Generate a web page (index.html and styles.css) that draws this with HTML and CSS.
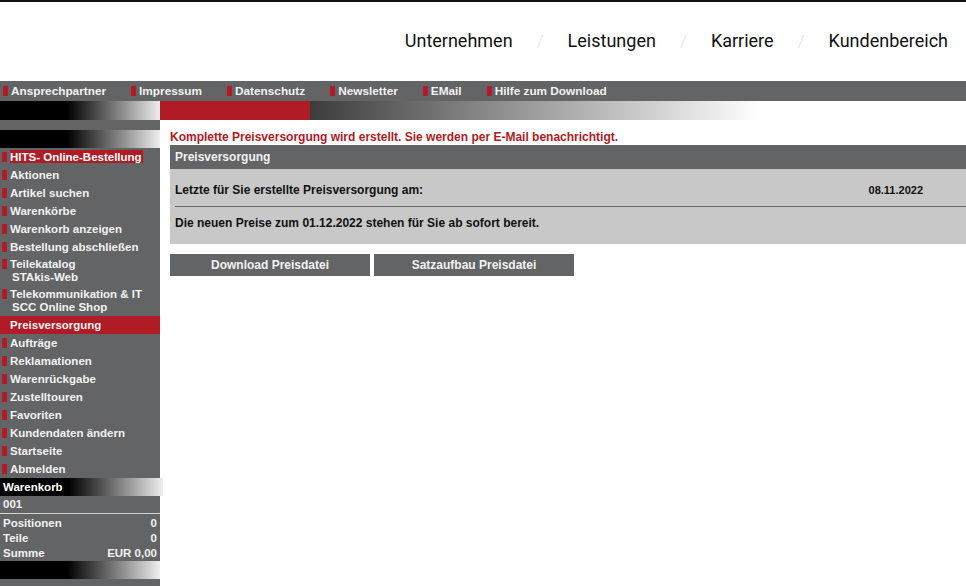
FILE: index.html
```html
<!DOCTYPE html>
<html lang="de">
<head>
	<meta charset="UTF-8" />
	<meta name="viewport" content="width=device-width, initial-scale=1.0" />
	<title>Preisversorgung</title>
	<link rel="stylesheet" href="styles.css">
</head>
<body>
	<div class="kopf">
		<ul class="hauptnav">
			<li><a href="#">Unternehmen</a></li>
			<li class="trenner">/</li>
			<li><a href="#">Leistungen</a></li>
			<li class="trenner">/</li>
			<li><a href="#">Karriere</a></li>
			<li class="trenner">/</li>
			<li><a href="#">Kundenbereich</a></li>
		</ul>
	</div>
	<div class="leiste">
		<a href="#">Ansprechpartner</a>
		<a href="#">Impressum</a>
		<a href="#">Datenschutz</a>
		<a href="#">Newsletter</a>
		<a href="#">EMail</a>
		<a href="#">Hilfe zum Download</a>
	</div>
	<div class="streifen">
		<div class="verlauf links"></div>
		<div class="rot"></div>
		<div class="verlauf grau"></div>
	</div>
	<div class="haupt">
		<div class="seite">
			<div class="abstand"></div>
			<div class="verlauf links zeile"></div>
			<ul class="menue">
				<li class="hits"><span>HITS- Online-Bestellung</span></li>
				<li>Aktionen</li>
				<li>Artikel suchen</li>
				<li>Warenkörbe</li>
				<li>Warenkorb anzeigen</li>
				<li>Bestellung abschließen</li>
				<li class="zwei">Teilekatalog<br><em>STAkis-Web</em></li>
				<li class="zwei">Telekommunikation &amp; IT<br><em>SCC Online Shop</em></li>
				<li class="aktiv">Preisversorgung</li>
				<li>Aufträge</li>
				<li>Reklamationen</li>
				<li>Warenrückgabe</li>
				<li>Zustelltouren</li>
				<li>Favoriten</li>
				<li>Kundendaten ändern</li>
				<li>Startseite</li>
				<li>Abmelden</li>
			</ul>
			<div class="verlauf links korbtitel">Warenkorb</div>
			<div class="korbnr">001</div>
			<div class="korb">
				<p><span>Positionen</span><span>0</span></p>
				<p><span>Teile</span><span>0</span></p>
				<p><span>Summe</span><span>EUR 0,00</span></p>
			</div>
			<div class="verlauf links zeile"></div>
			<div class="abstand"></div>
		</div>
		<div class="inhalt">
			<p class="meldung">Komplette Preisversorgung wird erstellt. Sie werden per E-Mail benachrichtigt.</p>
			<div class="kasten">
				<div class="kastenkopf">Preisversorgung</div>
				<div class="kastenbody">
					<div class="reihe erste"><span>Letzte für Sie erstellte Preisversorgung am:</span><span class="datum">08.11.2022</span></div>
					<div class="reihe">Die neuen Preise zum 01.12.2022 stehen für Sie ab sofort bereit.</div>
				</div>
			</div>
			<div class="knoepfe">
				<a href="#" class="knopf">Download Preisdatei</a>
				<a href="#" class="knopf">Satzaufbau Preisdatei</a>
			</div>
		</div>
	</div>
</body>
</html>
```

FILE: styles.css
```css
*{margin: 0;padding: 0;}
body{font: bold 12px "Liberation Sans", Arial, sans-serif;color: #111;background: #fff;}
a{text-decoration: none;color: inherit;}
ul{list-style: none;}

.kopf{height: 79px;border-top: 2px solid #111;}
.hauptnav{
	display: flex;justify-content: flex-end;align-items: center;
	height: 77px;padding-right: 18px;
	font: 400 18px Roboto, "Liberation Sans", sans-serif;color: #111;
}
.hauptnav .trenner{color: #e3e3e3;font-weight: 300;width: 55px;text-align: center;font-size: 17px;}

.leiste{
	display: flex;height: 20px;line-height: 20px;font-size: 11.8px;
	background: #636466;color: #f2f2f2;padding-left: 3px;
}
.leiste a{margin-right: 25px;}
.leiste a::before,
.menue li::before{
	content: "";display: inline-block;
	width: 5px;height: 10px;background: #b11b25;
	margin-right: 3px;vertical-align: -1px;
}

.streifen{display: flex;height: 19px;}
.verlauf.links{width: 160px;background: linear-gradient(to right, #000 42%, #eee 100%);}
.streifen .rot{width: 150px;background: #b11b25;}
.verlauf.grau{width: 450px;background: linear-gradient(to right, #3c3c3c, #fff);}

.haupt{display: flex;}
.seite{width: 160px;background: #636466;color: #f2f2f2;font-size: 11.5px;}
.abstand{height: 10px;}
.zeile{height: 18px;}

.menue li{height: 18px;line-height: 18px;padding-left: 2px;white-space: nowrap;}
.menue .hits span{background: #b11b25;color: #fff;padding: 1px 1px 0 0;}
.menue li.zwei{height: 26px;line-height: 13px;padding-top: 2px;padding-bottom: 2px;}
.menue li em{font-style: normal;padding-left: 10px;}
.menue li.aktiv{background: #b11b25;padding-left: 10px;}
.menue li.aktiv::before{display: none;}

.korbtitel{height: 18px;line-height: 18px;padding-left: 3px;width: 157px;color: #fff;}
.korbnr{height: 17px;line-height: 17px;padding-left: 3px;border-bottom: 1px solid #d4d4d4;}
.korb{padding: 2px 3px 0 3px;}
.korb p{display: flex;justify-content: space-between;height: 15px;line-height: 15px;}

.inhalt{flex: 1;padding-left: 10px;}
.meldung{color: #b11b25;padding-top: 10px;line-height: 15px;}
.kastenkopf{background: #636466;color: #f2f2f2;height: 24px;line-height: 24px;padding-left: 5px;}
.kastenbody{background: #c8c8c8;padding-left: 5px;}
.reihe{height: 25px;padding: 4px 0 8px 0;line-height: 25px;}
.reihe.erste{
	display: flex;justify-content: space-between;
	height: 31px;padding: 6px 43px 0 0;line-height: 31px;
	border-bottom: 1px solid #6a6a6a;
}
.reihe.erste .datum{font-size: 11px;}

.knoepfe{display: flex;gap: 4px;margin-top: 10px;}
.knopf{
	display: block;width: 200px;height: 22px;line-height: 22px;
	background: #636466;color: #f2f2f2;text-align: center;
}
```
